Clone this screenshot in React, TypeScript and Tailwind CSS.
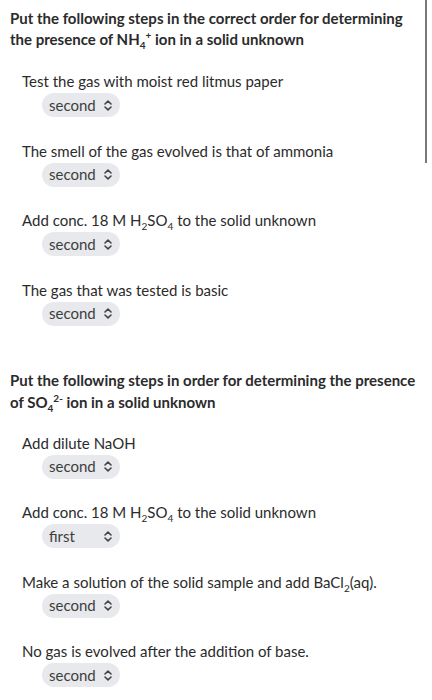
import React from "react";

function Chev() {
  return (
    <svg width="8" height="11" viewBox="0 0 8 11" fill="none" stroke="#444" strokeWidth="1.6" strokeLinecap="round" strokeLinejoin="round">
      <path d="M1 4 L4 1.2 L7 4" />
      <path d="M1 7 L4 9.8 L7 7" />
    </svg>
  );
}

function Pill({ value }: { value: string }) {
  return (
    <div className="ml-[20px] flex h-[24px] w-[78px] items-center justify-between rounded-full bg-[#e8e9ec] pl-[7px] pr-[8px] text-[15px] text-[#3d3d3d]">
      <span>{value}</span>
      <Chev />
    </div>
  );
}

function Item({ children, value }: { children: React.ReactNode; value: string }) {
  return (
    <div className="flex flex-col gap-[1px] pl-[22px]">
      <div className="text-[15px] leading-[21px] text-[#2b2b2b]">{children}</div>
      <Pill value={value} />
    </div>
  );
}

const sub = "text-[10px] align-sub leading-none";
const sup = "text-[10px] align-super leading-none";

export default function App() {
  return (
    <div className="relative h-[700px] w-[432px] bg-white" style={{ fontFamily: "Lato, 'Open Sans', sans-serif" }}>
      <div className="absolute right-[5px] top-0 h-[163px] w-[2px] bg-[#7a7a7a]" />
      <div className="flex flex-col pt-[8px]">
        <div className="flex flex-col gap-[21px]">
          <div className="px-[10px] text-[15px] font-bold leading-[21px] text-[#2b2b2b]">
            Put the following steps in the correct order for determining the presence of NH<span className={sub}>4</span><span className={sup}>+</span> ion in a solid unknown
          </div>
          <div className="flex flex-col gap-[23.5px]">
            <Item value="second">Test the gas with moist red litmus paper</Item>
            <Item value="second">The smell of the gas evolved is that of ammonia</Item>
            <Item value="second">Add conc. 18 M H<span className={sub}>2</span>SO<span className={sub}>4</span> to the solid unknown</Item>
            <Item value="second">The gas that was tested is basic</Item>
          </div>
        </div>
        <div className="flex flex-col gap-[19.5px] pt-[43.5px]">
          <div className="px-[10px] text-[15px] font-bold leading-[22px] text-[#2b2b2b]">
            Put the following steps in order for determining the presence of SO<span className={sub}>4</span><span className={sup}>2-</span> ion in a solid unknown
          </div>
          <div className="flex flex-col gap-[23.5px]">
            <Item value="second">Add dilute NaOH</Item>
            <Item value="first">Add conc. 18 M H<span className={sub}>2</span>SO<span className={sub}>4</span> to the solid unknown</Item>
            <Item value="second">Make a solution of the solid sample and add BaCl<span className={sub}>2</span>(aq).</Item>
            <Item value="second">No gas is evolved after the addition of base.</Item>
          </div>
        </div>
      </div>
    </div>
  );
}
